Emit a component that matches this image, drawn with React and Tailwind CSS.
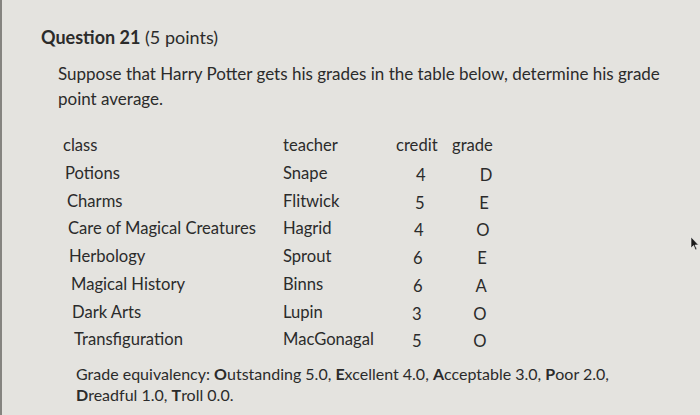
import React from "react";

const rows = [
  { c: "Potions", t: "Snape", n: "4", g: "D", cp: "pl-[2px]", np: "pl-[20px]", gp: "ml-[24px]" },
  { c: "Charms", t: "Flitwick", n: "5", g: "E", cp: "pl-[4px]", np: "pl-[19px]", gp: "ml-[22px]" },
  { c: "Care of Magical Creatures", t: "Hagrid", n: "4", g: "O", cp: "pl-[5px]", np: "pl-[18px]", gp: "ml-[21px]" },
  { c: "Herbology", t: "Sprout", n: "6", g: "E", cp: "pl-[6px]", np: "pl-[17px]", gp: "ml-[20px]" },
  { c: "Magical History", t: "Binns", n: "6", g: "A", cp: "pl-[8px]", np: "pl-[17px]", gp: "ml-[19px]" },
  { c: "Dark Arts", t: "Lupin", n: "3", g: "O", cp: "pl-[9px]", np: "pl-[16px]", gp: "ml-[18px]" },
  { c: "Transfiguration", t: "MacGonagal", n: "5", g: "O", cp: "pl-[11px]", np: "pl-[16px]", gp: "ml-[18px]" },
];

export default function App() {
  return (
    <div
      className="relative w-[700px] h-[415px] overflow-hidden bg-[#e4e3df] border-l-2 border-[#858480] text-[#2b2b2b]"
      style={{ fontFamily: "Lato, 'Open Sans', sans-serif" }}
    >
      <div className="pl-[39px] pt-[25px]">
        <h2 className="text-[18px] leading-[24px]">
          <span className="font-bold">Question 21</span> (5 points)
        </h2>
        <p className="mt-[12px] ml-[17px] w-[620px] text-[17px] leading-[25px]">
          Suppose that Harry Potter gets his grades in the table below, determine his grade point average.
        </p>

        <div className="mt-[21px] ml-[22px] text-[16.6px]">
          <div className="flex h-[27.7px] items-center">
            <div className="w-[220px]">class</div>
            <div className="w-[113px]">teacher</div>
            <div className="w-[56px]">credit</div>
            <div className="w-[44px]">grade</div>
          </div>
          {rows.map((r) => (
            <div key={r.c} className="flex h-[27.7px] items-center">
              <div className={"w-[220px] " + r.cp}>{r.c}</div>
              <div className="w-[113px]">{r.t}</div>
              <div className="w-[56px] pt-[4px]">
                <span className={"block " + r.np}>{r.n}</span>
              </div>
              <div className="w-[44px] pt-[4px]">
                <span className={"block w-[20px] text-center " + r.gp}>{r.g}</span>
              </div>
            </div>
          ))}
        </div>

        <p className="mt-[9px] ml-[35px] w-[560px] text-[16px] leading-[21px]">
          Grade equivalency: <b className="font-bold">O</b>utstanding 5.0, <b className="font-bold">E</b>xcellent 4.0,{" "}
          <b className="font-bold">A</b>cceptable 3.0, <b className="font-bold">P</b>oor 2.0, <b className="font-bold">D</b>readful 1.0,{" "}
          <b className="font-bold">T</b>roll 0.0.
        </p>
      </div>

      <svg
        className="absolute left-[688px] top-[236px]"
        width="10"
        height="15"
        viewBox="0 0 10 15"
      >
        <path d="M1 1 L1 12 L3.5 9.5 L5.5 14 L7 13.3 L5 9 L8.5 9 Z" fill="#1a1a1a" stroke="#f0f0f0" strokeWidth="0.6" />
      </svg>
    </div>
  );
}
